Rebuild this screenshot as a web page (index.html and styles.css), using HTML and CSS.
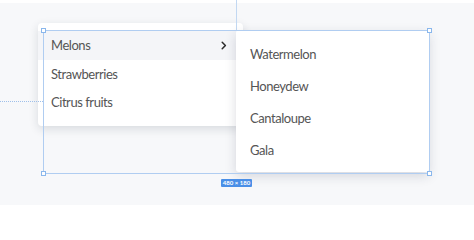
FILE: index.html
```html
<!DOCTYPE html>
<html>
<head>
<meta charset="utf-8">
<link rel="stylesheet" href="styles.css">
</head>
<body>
<div class="canvas">
  <div class="guide-v"></div>
  <div class="guide-h"></div>
  <ul class="menu">
    <li class="item active"><span>Melons</span>
      <svg class="chev" width="6" height="9" viewBox="0 0 6 9"><path d="M1.2 1.2 L4.4 4.5 L1.2 7.8" fill="none" stroke="#2b2b2b" stroke-width="1.5" stroke-linecap="round" stroke-linejoin="round"/></svg>
    </li>
    <li class="item">Strawberries</li>
    <li class="item">Citrus fruits</li>
  </ul>
  <ul class="submenu">
    <li class="sub-item">Watermelon</li>
    <li class="sub-item">Honeydew</li>
    <li class="sub-item">Cantaloupe</li>
    <li class="sub-item">Gala</li>
  </ul>
  <div class="selection">
    <span class="handle tl"></span>
    <span class="handle tr"></span>
    <span class="handle bl"></span>
    <span class="handle br"></span>
    <span class="size-label">480 × 180</span>
  </div>
</div>
</body>
</html>
```
FILE: styles.css
```css
* { box-sizing: border-box; }
html, body { margin: 0; padding: 0; background: #ffffff; }
body { font-family: "Lato", "Liberation Sans", sans-serif; width: 474px; height: 209px; overflow: hidden; }
.canvas {
  position: relative;
  margin-top: 3px;
  height: 202px;
  background: #f7f8fa;
  padding: 20px 0 0 38px;
}
.menu {
  list-style: none;
  margin: 0;
  padding: 8px 0 9px;
  width: 205px;
  background: #ffffff;
  border-radius: 4px;
  box-shadow: 0 3px 10px rgba(30, 40, 60, 0.14);
}
.item {
  height: 28.5px;
  display: flex;
  align-items: center;
  justify-content: space-between;
  padding: 0 16px 0 13px;
  font-size: 13px;
  letter-spacing: -0.45px;
  color: #555555;
}
.item.active { background: #f4f5f8; }
.chev { display: block; }
.submenu {
  position: absolute;
  left: 236px;
  top: 27px;
  width: 193px;
  list-style: none;
  margin: 0;
  padding: 8px 0 6px;
  background: #ffffff;
  border-radius: 3px;
  box-shadow: 0 4px 12px rgba(30, 40, 60, 0.16);
}
.sub-item {
  height: 32px;
  display: flex;
  align-items: center;
  padding: 0 14px;
  font-size: 13px;
  letter-spacing: -0.45px;
  color: #555555;
}
.selection {
  position: absolute;
  left: 43px;
  top: 27px;
  width: 387px;
  height: 144px;
  border: 1px solid #b0cdf1;
  pointer-events: none;
}
.handle {
  position: absolute;
  width: 5px;
  height: 5px;
  background: #ffffff;
  border: 1px solid #8ab7ec;
}
.handle.tl { left: -3px; top: -3px; }
.handle.tr { right: -3px; top: -3px; }
.handle.bl { left: -3px; bottom: -3px; }
.handle.br { right: -3px; bottom: -3px; }
.size-label {
  position: absolute;
  left: 177px;
  top: 148px;
  width: 31px;
  height: 8px;
  background: #4a8fe7;
  color: #ffffff;
  border-radius: 1px;
  font-size: 6px;
  line-height: 8px;
  font-weight: 700;
  text-align: center;
  white-space: nowrap;
}
.guide-v {
  position: absolute;
  left: 236px;
  top: -3px;
  width: 0;
  height: 30px;
  border-left: 1px solid #c2d8f2;
}
.guide-h {
  position: absolute;
  left: 0;
  top: 98px;
  width: 43px;
  height: 0;
  border-top: 1px dotted #9fc0ea;
}
```
